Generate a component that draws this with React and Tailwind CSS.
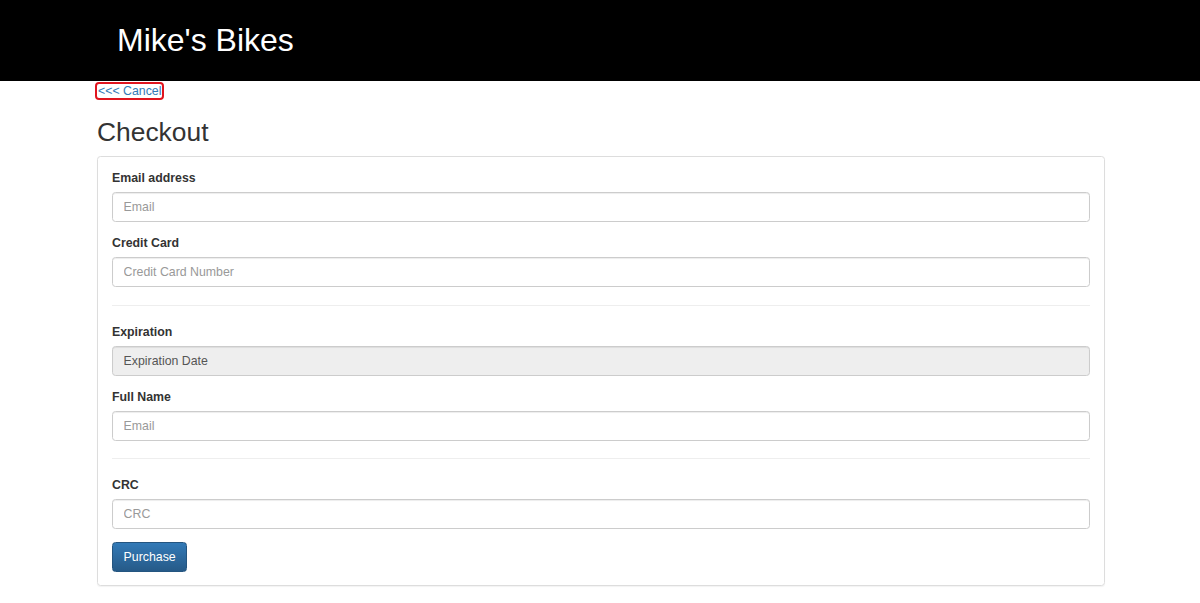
import React from 'react';

const font = { fontFamily: '"Liberation Sans", Arial, sans-serif' };

const Field = ({ label, placeholder, value, disabled, last }) => (
  <div className={last ? 'mb-0' : 'mb-[13.2px]'}>
    <label className="block font-bold text-[12.33px] leading-[17.62px] mb-[4.4px] text-[#333]">
      {label}
    </label>
    <input
      type="text"
      placeholder={placeholder}
      defaultValue={value}
      disabled={disabled}
      className={`block w-full h-[29.95px] px-[10.6px] text-[12.33px] rounded-[3.5px] border border-[#ccc] shadow-[inset_0_1px_1px_rgba(0,0,0,0.075)] placeholder:text-[#999] text-[#555] outline-none ${
        disabled ? 'bg-[#eee]' : 'bg-white'
      }`}
    />
  </div>
);

const Divider = () => <hr className="my-[17.62px] border-0 border-t border-[#eee]" />;

export default function App() {
  return (
    <div style={font} className="min-h-screen bg-white text-[#333] text-[12.33px]">
      {/* Header */}
      <div className="h-[81px] bg-black flex items-center pl-[117px]">
        <h1 className="text-white text-[32px] leading-[1.1] font-normal">Mike's Bikes</h1>
      </div>

      <div className="pl-[97px] pr-[95px]">
        <div className="leading-[17.62px] pt-[1.6px]">
          <a
            href="#"
            className="text-[#337ab7] outline-2 outline-[#e0141e] rounded-[2px] px-px"
          >
            &lt;&lt;&lt; Cancel
          </a>
        </div>

        <h2 className="text-[26.4px] leading-[1.1] mt-[17.62px] mb-[9.2px] font-normal text-[#333]">
          Checkout
        </h2>

        {/* Panel */}
        <div className="border border-[#ddd] rounded-[3.5px] shadow-[0_1px_1px_rgba(0,0,0,0.05)] px-[14px] pt-[13.2px] pb-[13.2px]">
          <Field label="Email address" placeholder="Email" />
          <Field label="Credit Card" placeholder="Credit Card Number" />
          <Divider />
          <Field label="Expiration" value="Expiration Date" disabled />
          <Field label="Full Name" placeholder="Email" />
          <Divider />
          <Field label="CRC" placeholder="CRC" />
          <button className="h-[29.95px] px-[10.6px] text-[12.33px] text-white rounded-[3.5px] border border-[#245580] bg-gradient-to-b from-[#337ab7] to-[#265a88]">
            Purchase
          </button>
        </div>
      </div>
    </div>
  );
}
